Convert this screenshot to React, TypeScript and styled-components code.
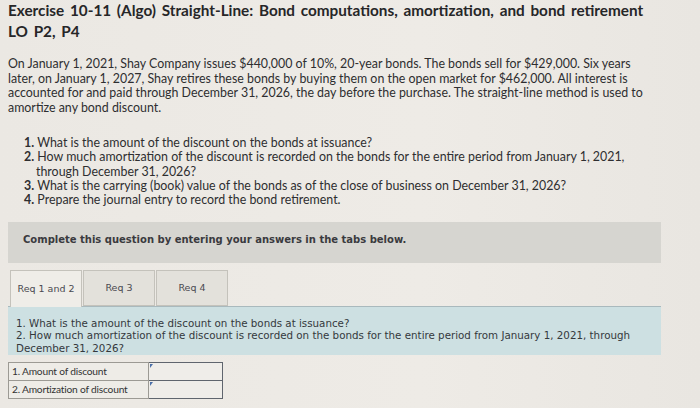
import styled, { createGlobalStyle } from 'styled-components';

const GlobalStyle = createGlobalStyle`
	html, body {
		margin: 0;
		padding: 0;
		background: #ebe8e3;
	}
	body {
		width: 700px;
		height: 408px;
		overflow: hidden;
	}
`;

const Page = styled.div`
	box-sizing: border-box;
	width: 700px;
	height: 408px;
	padding: 0 0 0 8px;
	background: linear-gradient(90deg, #ebe8e3 0%, #eeebe6 60%, #e9e6e1 100%);
	color: #2c2c2e;
	font-family: Lato, 'Open Sans', sans-serif;
`;

const Title = styled.h1`
	margin: 0;
	font-size: 15.3px;
	font-weight: 700;
	line-height: 21px;
	word-spacing: 2px;
	color: #262628;
`;

const Intro = styled.p`
	margin: 15px 0 0 0;
	width: 650px;
	font-size: 12.4px;
	line-height: 14.7px;
	color: #2e2e30;
`;

const Questions = styled.ol`
	margin: 20px 0 0 0;
	padding: 0 0 0 16px;
	list-style: none;
	width: 640px;
	font-size: 12.4px;
	line-height: 14.4px;
	color: #2e2e30;
`;

const Question = styled.li`
	padding-left: 12px;
	text-indent: -12px;
`;

const Num = styled.b`
	font-weight: 700;
`;

const Banner = styled.div`
	box-sizing: border-box;
	margin-top: 14px;
	width: 653px;
	height: 41px;
	padding: 12px 0 0 15px;
	background: #d6d5d0;
	font-family: 'DejaVu Sans', Verdana, sans-serif;
	font-size: 10px;
	font-weight: 700;
	color: #3a3a3e;
`;

const Tabs = styled.div`
	display: flex;
	gap: 1px;
	margin-top: 7px;
	padding-left: 2px;
`;

const Tab = styled.div<{ active?: boolean }>`
	box-sizing: border-box;
	width: 72px;
	height: ${({ active }) => (active ? '37px' : '36px')};
	margin-bottom: ${({ active }) => (active ? '-1px' : '0')};
	display: flex;
	align-items: center;
	justify-content: center;
	border: 1px solid #c4c2bb;
	border-bottom: ${({ active }) => (active ? 'none' : '1px solid #c4c2bb')};
	background: ${({ active }) => (active ? '#efede8' : '#e3e1db')};
	font-family: 'DejaVu Sans', Verdana, sans-serif;
	font-size: 9.5px;
	color: #4a4a50;
	position: relative;
	z-index: 1;
`;

const Panel = styled.div`
	box-sizing: border-box;
	width: 653px;
	height: 49px;
	padding: 10px 0 0 8px;
	background: #cde0e2;
	border-top: 1px solid #a9b9bd;
	font-family: 'DejaVu Sans', Verdana, sans-serif;
	font-size: 10.3px;
	line-height: 12.5px;
	color: #34383c;
`;

const AnswerTable = styled.table`
	margin-top: 7px;
	border-collapse: collapse;
	font-family: Lato, 'Open Sans', sans-serif;
	font-size: 10.2px;
	color: #333;
`;

const Label = styled.td`
	box-sizing: border-box;
	width: 140px;
	height: 18px;
	padding: 0 0 0 3px;
	border: 1px solid #9c9a94;
	background: #eeece7;
	letter-spacing: -0.2px;
`;

const InputCell = styled.td`
	box-sizing: border-box;
	width: 74px;
	height: 18px;
	padding: 0;
	border: 1.5px solid #5f656e;
	background: #efede9;
	position: relative;
`;

const Marker = styled.span`
	position: absolute;
	left: 1px;
	top: 1px;
	width: 0;
	height: 0;
	border-top: 4px solid #4a6fa8;
	border-right: 3px solid transparent;
`;

export default function App() {
	return (
		<>
			<GlobalStyle />
			<Page>
				<Title>
					Exercise 10-11 (Algo) Straight-Line: Bond computations, amortization, and bond retirement
					<br />
					LO P2, P4
				</Title>
				<Intro>
					On January 1, 2021, Shay Company issues $440,000 of 10%, 20-year bonds. The bonds sell for $429,000. Six years
					later, on January 1, 2027, Shay retires these bonds by buying them on the open market for $462,000. All interest is
					accounted for and paid through December 31, 2026, the day before the purchase. The straight-line method is used to
					amortize any bond discount.
				</Intro>
				<Questions>
					<Question><Num>1.</Num> What is the amount of the discount on the bonds at issuance?</Question>
					<Question>
						<Num>2.</Num> How much amortization of the discount is recorded on the bonds for the entire period from January 1, 2021,
						through December 31, 2026?
					</Question>
					<Question><Num>3.</Num> What is the carrying (book) value of the bonds as of the close of business on December 31, 2026?</Question>
					<Question><Num>4.</Num> Prepare the journal entry to record the bond retirement.</Question>
				</Questions>
				<Banner>Complete this question by entering your answers in the tabs below.</Banner>
				<Tabs>
					<Tab active>Req 1 and 2</Tab>
					<Tab>Req 3</Tab>
					<Tab>Req 4</Tab>
				</Tabs>
				<Panel>
					1. What is the amount of the discount on the bonds at issuance?
					<br />
					2. How much amortization of the discount is recorded on the bonds for the entire period from January 1, 2021, through
					<br />
					December 31, 2026?
				</Panel>
				<AnswerTable>
					<tbody>
						<tr>
							<Label>1. Amount of discount</Label>
							<InputCell><Marker /></InputCell>
						</tr>
						<tr>
							<Label>2. Amortization of discount</Label>
							<InputCell><Marker /></InputCell>
						</tr>
					</tbody>
				</AnswerTable>
			</Page>
		</>
	);
}
